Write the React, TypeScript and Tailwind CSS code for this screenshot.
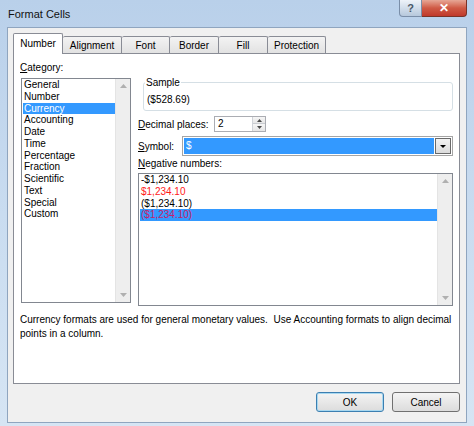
import React from 'react';

const categories = [
  'General',
  'Number',
  'Currency',
  'Accounting',
  'Date',
  'Time',
  'Percentage',
  'Fraction',
  'Scientific',
  'Text',
  'Special',
  'Custom',
];

const tabs: { label: string; w: string }[] = [
  { label: 'Alignment', w: 'w-[59px]' },
  { label: 'Font', w: 'w-[48px]' },
  { label: 'Border', w: 'w-[49px]' },
  { label: 'Fill', w: 'w-[49px]' },
  { label: 'Protection', w: 'w-[58px]' },
];

function Tri({ up, color = '#9a9a9a', w = 7, h = 4 }: { up?: boolean; color?: string; w?: number; h?: number }) {
  return (
    <svg width={w} height={h} viewBox={`0 0 ${w} ${h}`}>
      {up ? (
        <polygon points={`0,${h} ${w / 2},0 ${w},${h}`} fill={color} />
      ) : (
        <polygon points={`0,0 ${w},0 ${w / 2},${h}`} fill={color} />
      )}
    </svg>
  );
}

function ScrollTrack() {
  return (
    <div className="w-[15px] h-full bg-[#eeeeee] border-l border-[#e4e4e4] flex flex-col justify-between items-center py-[5px]">
      <Tri up color="#b0b0b0" />
      <Tri color="#b0b0b0" />
    </div>
  );
}

function U({ children }: { children: React.ReactNode }) {
  return <span className="underline underline-offset-1">{children}</span>;
}

export default function App() {
  return (
    <div className="w-[474px] h-[426px] bg-linear-to-b from-[#b9d0ea] via-[#c9dcf0] to-[#d6e5f4] px-[7px] flex flex-col font-['Liberation_Sans',Arial,sans-serif] text-[10px] text-black overflow-hidden">
      {/* title bar */}
      <div className="h-[27px] flex items-start justify-between shrink-0">
        <span className="pl-px pt-[8px] text-[11px] leading-[13px] text-[#111]">Format Cells</span>
        <div className="flex">
          <div className="w-[23px] h-[17px] rounded-bl-[4px] border border-t-0 border-[#7a8ea8] bg-linear-to-b from-[#eef3f9] to-[#b6c8dc] flex items-center justify-center text-[11px] font-bold text-[#4a5868]">
            ?
          </div>
          <div className="w-[45px] h-[17px] rounded-br-[4px] border border-t-0 border-l-0 border-[#7a3327] bg-linear-to-b from-[#e6a796] via-[#cf5a45] to-[#c0392b] flex items-center justify-center text-[12px] font-bold text-white">
            ✕
          </div>
        </div>
      </div>

      {/* client area */}
      <div className="h-[396px] shrink-0 bg-[#f0f0f0] border border-[#8fa5bf] pt-[5px] pl-[5px] pr-[6px] flex flex-col">
        {/* tabs */}
        <div className="flex items-end h-[20px]">
          <div className="relative z-10 w-[50px] h-[21px] -mb-px bg-white border border-b-0 border-[#898c95] rounded-t-[2px] flex items-center justify-center pb-px">
            Number
          </div>
          {tabs.map((t) => (
            <div
              key={t.label}
              className={`${t.w} h-[17px] border-t border-r border-[#898c95] rounded-t-[2px] bg-linear-to-b from-[#f3f3f3] to-[#e2e2e2] flex items-center justify-center`}
            >
              {t.label}
            </div>
          ))}
        </div>

        {/* tab panel */}
        <div className="w-[447px] h-[331px] bg-white border border-[#898c95] pt-[7px] pl-[6px] flex flex-col">
          <div className="flex">
            {/* category column */}
            <div className="w-[111px] flex flex-col">
              <div className="leading-[13px]">
                <U>C</U>ategory:
              </div>
              <div className="ml-px mt-[4px] w-[110px] h-[225px] border border-[#828790] flex">
                <div className="flex-1 pl-px">
                  {categories.map((c) => (
                    <div
                      key={c}
                      className={`h-[11.75px] leading-[11.75px] pl-[1px] ${c === 'Currency' ? 'bg-[#3399ff] text-white' : ''}`}
                    >
                      {c}
                    </div>
                  ))}
                </div>
                <ScrollTrack />
              </div>
            </div>

            {/* right column */}
            <div className="ml-[7px] w-[315px] flex flex-col">
              <div className="relative mt-[21px] ml-[5px] w-[310px] h-[29px] border border-[#d5dfe5] rounded-[3px] pl-[3px] pt-[10px] leading-[13px]">
                <span className="absolute -top-[7px] left-[1px] bg-white px-px leading-[13px]">Sample</span>
                ($528.69)
              </div>

              <div className="mt-[5px] h-[16px] flex items-center">
                <span className="w-[76px]">
                  <U>D</U>ecimal places:
                </span>
                <div className="w-[52px] h-[16px] border border-[#abadb3] flex">
                  <span className="flex-1 pl-[3px] leading-[14px]">2</span>
                  <div className="w-[13px] flex flex-col border-l border-[#d0d3d8]">
                    <div className="h-[7px] bg-linear-to-b from-[#f6f6f6] to-[#e6e6e6] border-b border-[#c9ccd1] flex items-center justify-center">
                      <Tri up color="#4a4a4a" w={5} h={3} />
                    </div>
                    <div className="flex-1 bg-linear-to-b from-[#f6f6f6] to-[#e6e6e6] flex items-center justify-center">
                      <Tri color="#4a4a4a" w={5} h={3} />
                    </div>
                  </div>
                </div>
              </div>

              <div className="mt-[4px] h-[20px] flex items-center">
                <span className="w-[44px]">
                  <U>S</U>ymbol:
                </span>
                <div className="w-[271px] h-[20px] border border-[#a5a5a5] p-px flex">
                  <div className="flex-1 bg-[#3399ff] text-white pl-[2px] leading-[16px]">$</div>
                  <div className="ml-px w-[16px] border border-[#6a6a6a] bg-linear-to-b from-[#f2f2f2] to-[#dcdcdc] flex items-center justify-center">
                    <Tri color="#000" w={6} h={3} />
                  </div>
                </div>
              </div>

              <div className="mt-[1px] leading-[13px]">
                <U>N</U>egative numbers:
              </div>
              <div className="mt-[3px] w-[315px] h-[133px] border border-[#828790] flex">
                <div className="flex-1 pl-px">
                  <div className="h-[11.75px] leading-[11.75px] pl-[1px]">-$1,234.10</div>
                  <div className="h-[11.75px] leading-[11.75px] pl-[1px] text-[#ff1a1a]">$1,234.10</div>
                  <div className="h-[11.75px] leading-[11.75px] pl-[1px]">($1,234.10)</div>
                  <div className="h-[11.75px] leading-[11.75px] pl-[1px] bg-[#3399ff] text-[#c8206a]">($1,234.10)</div>
                </div>
                <ScrollTrack />
              </div>
            </div>
          </div>

          <p className="mt-[7px] leading-[14px]">
            Currency formats are used for general monetary values.{'\u00a0 '}Use Accounting formats to align decimal
            <br />
            points in a column.
          </p>
        </div>

        {/* buttons */}
        <div className="mt-[8px] flex justify-end gap-[8px]">
          <button className="w-[68px] h-[20px] rounded-[3px] border border-[#3c7fb1] bg-linear-to-b from-[#f4f4f4] to-[#dcdcdc] shadow-[inset_0_0_0_1px_#a8d8f0]">
            OK
          </button>
          <button className="w-[68px] h-[20px] rounded-[3px] border border-[#707070] bg-linear-to-b from-[#f4f4f4] to-[#dcdcdc]">
            Cancel
          </button>
        </div>
      </div>
    </div>
  );
}
